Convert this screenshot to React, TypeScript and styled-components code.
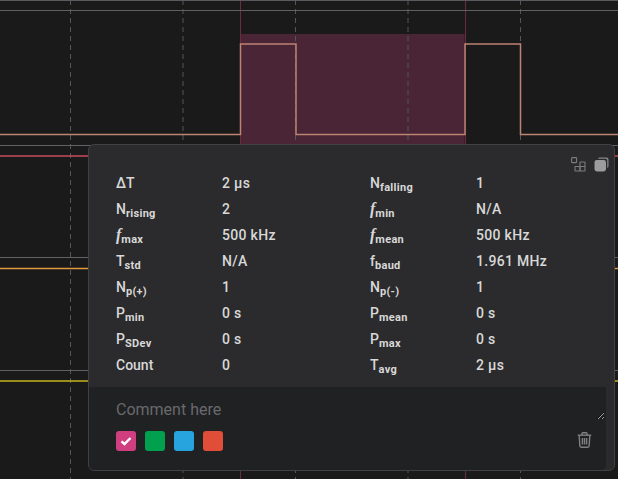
import styled, { createGlobalStyle } from "styled-components";

const measurements = [
  { name: "ΔT", value: "2 μs" },
  { name: "N", sub: "falling", value: "1" },
  { name: "N", sub: "rising", value: "2" },
  { name: "f", italic: true, sub: "min", value: "N/A" },
  { name: "f", italic: true, sub: "max", value: "500 kHz" },
  { name: "f", italic: true, sub: "mean", value: "500 kHz" },
  { name: "T", sub: "std", value: "N/A" },
  { name: "f", sub: "baud", value: "1.961 MHz" },
  { name: "N", sub: "p(+)", value: "1" },
  { name: "N", sub: "p(-)", value: "1" },
  { name: "P", sub: "min", value: "0 s" },
  { name: "P", sub: "mean", value: "0 s" },
  { name: "P", sub: "SDev", value: "0 s" },
  { name: "P", sub: "max", value: "0 s" },
  { name: "Count", value: "0" },
  { name: "T", sub: "avg", value: "2 μs" },
];

const swatches = ["#cf3f80", "#00a04f", "#27a3dd", "#e04d39"];

function Waveforms() {
  return (
    <Canvas viewBox="0 0 618 479">
      <rect x="240" y="34" width="224.5" height="120" fill="#4a2535" />
      {[70.5, 183, 295.5, 408, 520.5].map((x) => (
        <line key={x} x1={x} y1="0" x2={x} y2="479" stroke="#55555a" strokeDasharray="5 4" />
      ))}
      <line x1="240.5" y1="0" x2="240.5" y2="479" stroke="#6f2a3c" />
      <line x1="465.5" y1="0" x2="465.5" y2="479" stroke="#6f2a3c" />
      <line x1="0" y1="0.5" x2="618" y2="0.5" stroke="#5a5a5e" />
      <line x1="0" y1="10.5" x2="618" y2="10.5" stroke="#606064" strokeWidth="1.2" />
      <polyline
        points="0,134.5 240.5,134.5 240.5,44 296,44 296,134.5 465,134.5 465,44 520.5,44 520.5,134.5 618,134.5"
        fill="none"
        stroke="#bd8373"
        strokeWidth="1.5"
      />
      <line x1="0" y1="145.5" x2="618" y2="145.5" stroke="#606064" strokeWidth="1.2" />
      <line x1="0" y1="156" x2="618" y2="156" stroke="#c84a5c" strokeWidth="1.5" />
      <line x1="0" y1="257.5" x2="618" y2="257.5" stroke="#606064" strokeWidth="1.2" />
      <line x1="0" y1="268.5" x2="618" y2="268.5" stroke="#e09a3c" strokeWidth="1.3" />
      <line x1="0" y1="370.5" x2="618" y2="370.5" stroke="#606064" strokeWidth="1.2" />
      <line x1="0" y1="381" x2="618" y2="381" stroke="#c4b51e" strokeWidth="1.5" />
    </Canvas>
  );
}

function App() {
  return (
    <Scope>
      <GlobalStyle />
      <Waveforms />
      <Panel>
        <PanelTools>
          <svg width="15" height="15" viewBox="0 0 15 15" fill="none" stroke="#7c7c7f" strokeWidth="1.1">
            <rect x="0.6" y="0.6" width="5" height="5" rx="0.6" />
            <rect x="9" y="5" width="5" height="4.5" rx="0.4" />
            <rect x="4" y="9.5" width="5" height="4.5" rx="0.4" />
            <rect x="9" y="9.5" width="5" height="4.5" rx="0.4" />
          </svg>
          <svg width="15" height="15" viewBox="0 0 15 15">
            <path d="M4 1.8C4.4.9 5 .5 6 .5h6.5c1.2 0 2 .8 2 2V9c0 1-.5 1.7-1.3 2V3.4c0-.9-.7-1.6-1.6-1.6z" fill="#88888b" />
            <rect x="0.5" y="3" width="11.5" height="11.5" rx="2.4" fill="#9c9c9f" />
          </svg>
        </PanelTools>
        <Measurements>
          {measurements.map((m) => (
            <Measurement key={m.name + (m.sub ?? "")}>
              <Label>
                <Symbol $italic={m.italic}>{m.name}</Symbol>
                {m.sub && <Sub>{m.sub}</Sub>}
              </Label>
              <Value>{m.value}</Value>
            </Measurement>
          ))}
        </Measurements>
        <CommentBox>
          <CommentInput placeholder="Comment here" />
          <CommentFooter>
            <Swatches>
              {swatches.map((c, i) => (
                <Swatch key={c} $color={c}>
                  {i === 0 && (
                    <svg width="12" height="10" viewBox="0 0 12 10" fill="none">
                      <path d="M1.5 5.4l3 2.6L10.5 2" stroke="#fff" strokeWidth="2.4" />
                    </svg>
                  )}
                </Swatch>
              ))}
            </Swatches>
            <TrashIcon width="15" height="16" viewBox="0 0 15 16" fill="none" stroke="#808083" strokeWidth="1.4">
              <path d="M0.8 3.2h13.4" />
              <path d="M5 3V1.6c0-.5.3-.9.9-.9h3.2c.6 0 .9.4.9.9V3" />
              <path d="M2.2 3.2l.6 10.4c0 1 .7 1.6 1.6 1.6h6.2c.9 0 1.6-.6 1.6-1.6l.6-10.4" />
              <path d="M5.4 6v6.4M7.5 6v6.4M9.6 6v6.4" />
            </TrashIcon>
          </CommentFooter>
        </CommentBox>
      </Panel>
    </Scope>
  );
}

export default App;

const GlobalStyle = createGlobalStyle`
  html, body {
    margin: 0;
    background: #1a1a1b;
  }
`;

const Scope = styled.div`
  position: relative;
  width: 618px;
  height: 479px;
  overflow: hidden;
  background: #1a1a1b;
  font-family: Roboto, "Liberation Sans", sans-serif;
`;

const Canvas = styled.svg`
  display: block;
  width: 618px;
  height: 479px;
`;

const Panel = styled.div`
  position: absolute;
  left: 88px;
  top: 144px;
  width: 527px;
  height: 327px;
  box-sizing: border-box;
  display: flex;
  flex-direction: column;
  background: #2b2b2d;
  border: 1px solid #414144;
  border-radius: 6px;
`;

const PanelTools = styled.div`
  position: absolute;
  top: 12px;
  right: 5px;
  display: flex;
  gap: 8px;
`;

const Measurements = styled.div`
  display: grid;
  grid-template-columns: 254px 1fr;
  grid-auto-rows: 26px;
  padding: 25px 0 9px 27px;
`;

const Measurement = styled.div`
  display: grid;
  grid-template-columns: 106px 1fr;
  align-items: center;
  font-size: 14px;
  font-weight: 500;
  letter-spacing: 0.3px;
  color: #d8d8d8;
`;

const Label = styled.span`
  white-space: nowrap;
`;

const Symbol = styled.span<{ $italic?: boolean }>`
  font-style: ${(p) => (p.$italic ? "italic" : "normal")};
  font-family: ${(p) => (p.$italic ? '"Liberation Serif", serif' : "inherit")};
  font-weight: ${(p) => (p.$italic ? 700 : 500)};
  font-size: ${(p) => (p.$italic ? "16px" : "14px")};
  letter-spacing: 0;
`;

const Sub = styled.sub`
  font-size: 11px;
  font-weight: 700;
  line-height: 0;
  vertical-align: -3px;
`;

const Value = styled.span`
  white-space: nowrap;
`;

const CommentBox = styled.div`
  flex: 1;
  margin-right: 8px;
  background: #202123;
  border-bottom-left-radius: 5px;
  border-bottom-right-radius: 5px;
`;

const CommentInput = styled.textarea`
  display: block;
  box-sizing: border-box;
  width: calc(100% - 1px);
  height: 33px;
  margin: 0;
  padding: 13px 27px 0;
  border: 0;
  outline: 0;
  background: transparent;
  color: #d8d8d8;
  font-family: inherit;
  font-size: 16px;
  line-height: 19px;
  overflow: hidden;

  &::placeholder {
    color: #69696c;
  }
`;

const CommentFooter = styled.div`
  display: flex;
  align-items: flex-start;
  justify-content: space-between;
  padding: 11px 14px 0 27px;
`;

const Swatches = styled.div`
  display: flex;
  gap: 9px;
`;

const Swatch = styled.div<{ $color: string }>`
  width: 20px;
  height: 20px;
  display: flex;
  align-items: center;
  justify-content: center;
  background: ${(p) => p.$color};
  border-radius: 3px;
`;

const TrashIcon = styled.svg`
  display: block;
  margin-top: 1px;
`;
